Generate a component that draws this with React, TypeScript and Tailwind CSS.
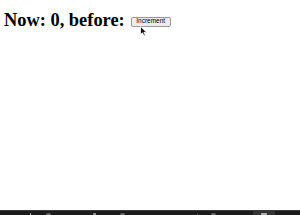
import React from "react";

export default function App() {
  return (
    <div className="h-[215px] w-[300px] flex flex-col bg-white overflow-hidden relative">
      <div className="flex-1 pl-[4px] pt-[10px]">
        <h1
          className="flex items-center text-[18.4px] leading-[20px] font-bold text-black"
          style={{ fontFamily: '"Liberation Serif", "Times New Roman", serif' }}
        >
          <span>Now: 0, before:</span>
          <button
            className="ml-[6px] mt-[3px] h-[10px] w-[40px] flex items-center justify-center rounded-[2px] border border-[#9a9a9a] bg-[#ececec] text-[6.5px] font-normal leading-none text-black"
            style={{ fontFamily: '"Liberation Sans", Arial, sans-serif' }}
          >
            Increment
          </button>
        </h1>
      </div>
      <svg
        className="absolute left-[140px] top-[26px]"
        width="8"
        height="11"
        viewBox="0 0 8 11"
      >
        <path d="M0.5 0.5 L0.5 8.5 L2.5 6.8 L4 10 L5.3 9.4 L3.9 6.3 L6.6 6.3 Z" fill="#111" stroke="#fff" strokeWidth="0.8" />
      </svg>
      <div className="h-[5px] bg-[#1c1c1c] border-t border-[#3a3a3a] flex items-end">
        <div className="ml-[30px] h-[2px] w-[1px] bg-[#aaa]" />
        <div className="ml-[15px] h-[2px] w-[5px] rounded-t-full bg-[#666]" />
        <div className="ml-[42px] h-[2px] w-[3px] bg-[#888]" />
        <div className="ml-[24px] h-[2px] w-[5px] rounded-t-full bg-[#666]" />
        <div className="ml-[72px] h-[1px] w-[1px] bg-[#888]" />
        <div className="ml-[13px] h-[2px] w-[5px] rounded-t-full bg-[#666]" />
        <div className="ml-[37px] h-[4px] w-[22px] bg-[#333] flex items-end justify-center">
          <div className="h-[2px] w-[6px] bg-[#aaa]" />
        </div>
      </div>
    </div>
  );
}
